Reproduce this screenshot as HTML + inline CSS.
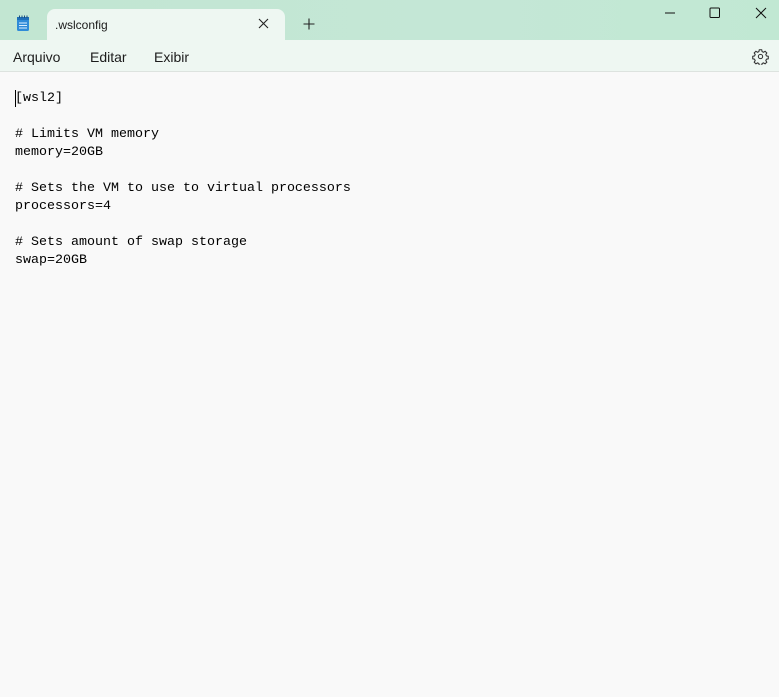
<!DOCTYPE html>
<html><head><meta charset="utf-8"><style>
*{margin:0;padding:0;box-sizing:border-box}
html,body{width:779px;height:697px;overflow:hidden;background:#f9f9f9;font-family:"Segoe UI","Liberation Sans",sans-serif}
#title{position:absolute;left:0;top:0;width:779px;height:40px;background:linear-gradient(90deg,#c2e6d2,#c4e7d6 60%,#c1e8d3)}
#tab{position:absolute;left:47px;top:9px;width:238px;height:32px;background:#eef7f2;border-radius:8px 8px 0 0}
#tab span{position:absolute;left:8px;top:9px;font-size:12px;color:#1a1a1a}
#menu{position:absolute;left:0;top:40px;width:779px;height:32px;background:#eef7f2;border-bottom:1px solid #dde3df}
#menu span{position:absolute;top:9px;font-size:14px;color:#1c1c1c}
#ed{position:absolute;left:15px;top:90px;font-family:"Liberation Mono",monospace;font-size:13.33px;line-height:18px;color:#000;white-space:pre}
#cur{position:absolute;left:15px;top:90px;width:1px;height:17px;background:#000}
svg{position:absolute}
</style></head><body>
<div id="title"></div>
<svg style="left:16px;top:15px" width="14" height="17" viewBox="0 0 14 17"><rect x="1" y="2" width="12" height="14" rx="1.5" fill="#2f8bd8"/><rect x="1" y="2" width="12" height="3" fill="#1e6fb8"/><g stroke="#dcefff" stroke-width="1"><line x1="3" y1="8" x2="11" y2="8"/><line x1="3" y1="10.5" x2="11" y2="10.5"/><line x1="3" y1="13" x2="11" y2="13"/></g><g fill="#1a4f80"><rect x="3" y="0.5" width="1" height="2.5"/><rect x="5.5" y="0.5" width="1" height="2.5"/><rect x="8" y="0.5" width="1" height="2.5"/><rect x="10.5" y="0.5" width="1" height="2.5"/></g></svg>
<div id="tab"><span>.wslconfig</span></div>
<svg style="left:258px;top:18px" width="11" height="11" viewBox="0 0 11 11"><path d="M1 1L10 10M10 1L1 10" stroke="#222" stroke-width="1.1"/></svg>
<svg style="left:303px;top:18px" width="12" height="12" viewBox="0 0 12 12"><path d="M6 0.5V11.5M0.5 6H11.5" stroke="#222" stroke-width="1.1"/></svg>
<svg style="left:664px;top:7px" width="12" height="12" viewBox="0 0 12 12"><path d="M1 6H11" stroke="#111" stroke-width="1"/></svg>
<svg style="left:709px;top:7px" width="12" height="12" viewBox="0 0 12 12"><rect x="1" y="1" width="9.5" height="9.5" rx="1" fill="none" stroke="#111" stroke-width="1"/></svg>
<svg style="left:755px;top:7px" width="12" height="12" viewBox="0 0 12 12"><path d="M1 1L11 11M11 1L1 11" stroke="#111" stroke-width="1"/></svg>
<div id="menu"><span style="left:13px">Arquivo</span><span style="left:90px">Editar</span><span style="left:154px">Exibir</span></div>
<svg style="left:752px;top:48px" width="17" height="17" viewBox="0 0 24 24"><path fill="none" stroke="#333" stroke-width="1.5" d="M10.3 2.5h3.4l.6 2.6 1.9.9 2.3-1.4 2.4 2.4-1.4 2.3.9 1.9 2.6.6v3.4l-2.6.6-.9 1.9 1.4 2.3-2.4 2.4-2.3-1.4-1.9.9-.6 2.6h-3.4l-.6-2.6-1.9-.9-2.3 1.4-2.4-2.4 1.4-2.3-.9-1.9-2.6-.6v-3.4l2.6-.6.9-1.9-1.4-2.3 2.4-2.4 2.3 1.4 1.9-.9z"/><circle cx="12" cy="12" r="3" fill="none" stroke="#333" stroke-width="1.5"/></svg>
<div id="ed">[wsl2]

# Limits VM memory
memory=20GB

# Sets the VM to use to virtual processors
processors=4

# Sets amount of swap storage
swap=20GB</div>
<div id="cur"></div>
</body></html>
